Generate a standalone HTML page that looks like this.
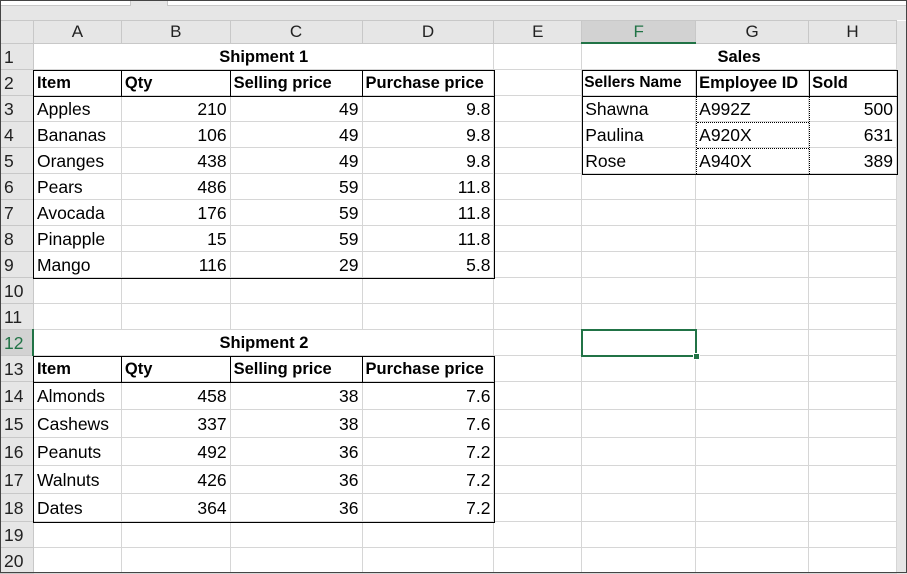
<!DOCTYPE html>
<html><head><style>
body{margin:0;width:907px;height:573px;overflow:hidden;background:#fff;font-family:"Liberation Sans",Arial,sans-serif;position:relative}
.top{position:absolute;left:0;top:0;width:907px;height:20px;background:#e6e6e6}
table{position:absolute;left:0;top:20px;border-collapse:collapse;table-layout:fixed;font-size:17.5px}
td{border:1px solid #d6d6d6;padding:0 3px 1px;white-space:nowrap;overflow:hidden;height:24px;line-height:22px;vertical-align:bottom;color:#000}
tr.h td{height:21px;line-height:21px;padding-bottom:0;vertical-align:middle;background:#e6e6e6;text-align:center;color:#222;border-color:#c8c8c8;font-size:17px}
td.rh{background:#e6e6e6;text-align:left;padding-left:3px;color:#222;border-color:#c8c8c8;font-size:17.5px}
tr.t td{height:25px;padding-bottom:2px}
.r{text-align:right}.c{text-align:center}.b{font-weight:bold;font-size:16.5px}
.bx{position:absolute;border:1px solid #000;box-sizing:border-box}
.ln{position:absolute;background:#000}
.dv{position:absolute;border-left:1px dotted #000}
.dh{position:absolute;border-top:1px dotted #000}
</style></head><body>
<div class="top">
<div style="position:absolute;left:0;top:0;width:129px;height:5px;background:#fff;border:1px solid #c8c8c8;border-top:none"></div>
<div style="position:absolute;left:167px;top:0;width:740px;height:5px;background:#fff;border-left:1px solid #c8c8c8;border-bottom:1px solid #c8c8c8"></div>
</div>
<table>
<colgroup><col style="width:33px"><col style="width:88px"><col style="width:109px"><col style="width:132px"><col style="width:132px"><col style="width:88px"><col style="width:114px"><col style="width:113px"><col style="width:88px"><col style="width:10px"></colgroup>
<tr class="h"><td style="background:#e6e6e6"></td><td>A</td><td>B</td><td>C</td><td>D</td><td>E</td><td style="background:#d2d2d2;color:#217346;border-bottom:2px solid #217346">F</td><td>G</td><td>H</td><td style="background:#e6e6e6;border:none"></td></tr>
<tr><td class="rh">1</td><td colspan="4" class="c b">Shipment 1</td><td></td><td colspan="3" class="c b">Sales</td><td style="background:#e6e6e6;border:none"></td></tr>
<tr><td class="rh">2</td><td class="b">Item</td><td class="b">Qty</td><td class="b">Selling price</td><td class="b">Purchase price</td><td></td><td class="b" style="padding:0 2px 1px;font-size:15.5px">Sellers Name</td><td class="b">Employee ID</td><td class="b">Sold</td><td style="background:#e6e6e6;border:none"></td></tr>
<tr><td class="rh">3</td><td>Apples</td><td class="r">210</td><td class="r">49</td><td class="r">9.8</td><td></td><td>Shawna</td><td>A992Z</td><td class="r">500</td><td style="background:#e6e6e6;border:none"></td></tr>
<tr><td class="rh">4</td><td>Bananas</td><td class="r">106</td><td class="r">49</td><td class="r">9.8</td><td></td><td>Paulina</td><td>A920X</td><td class="r">631</td><td style="background:#e6e6e6;border:none"></td></tr>
<tr><td class="rh">5</td><td>Oranges</td><td class="r">438</td><td class="r">49</td><td class="r">9.8</td><td></td><td>Rose</td><td>A940X</td><td class="r">389</td><td style="background:#e6e6e6;border:none"></td></tr>
<tr><td class="rh">6</td><td>Pears</td><td class="r">486</td><td class="r">59</td><td class="r">11.8</td><td></td><td></td><td></td><td></td><td style="background:#e6e6e6;border:none"></td></tr>
<tr><td class="rh">7</td><td>Avocada</td><td class="r">176</td><td class="r">59</td><td class="r">11.8</td><td></td><td></td><td></td><td></td><td style="background:#e6e6e6;border:none"></td></tr>
<tr><td class="rh">8</td><td>Pinapple</td><td class="r">15</td><td class="r">59</td><td class="r">11.8</td><td></td><td></td><td></td><td></td><td style="background:#e6e6e6;border:none"></td></tr>
<tr><td class="rh">9</td><td>Mango</td><td class="r">116</td><td class="r">29</td><td class="r">5.8</td><td></td><td></td><td></td><td></td><td style="background:#e6e6e6;border:none"></td></tr>
<tr><td class="rh">10</td><td></td><td></td><td></td><td></td><td></td><td></td><td></td><td></td><td style="background:#e6e6e6;border:none"></td></tr>
<tr><td class="rh">11</td><td></td><td></td><td></td><td></td><td></td><td></td><td></td><td></td><td style="background:#e6e6e6;border:none"></td></tr>
<tr><td class="rh" style="background:#d2d2d2;color:#217346;border-right:2px solid #217346">12</td><td colspan="4" class="c b">Shipment 2</td><td></td><td></td><td></td><td></td><td style="background:#e6e6e6;border:none"></td></tr>
<tr><td class="rh">13</td><td class="b">Item</td><td class="b">Qty</td><td class="b">Selling price</td><td class="b">Purchase price</td><td></td><td></td><td></td><td></td><td style="background:#e6e6e6;border:none"></td></tr>
<tr class="t"><td class="rh">14</td><td>Almonds</td><td class="r">458</td><td class="r">38</td><td class="r">7.6</td><td></td><td></td><td></td><td></td><td style="background:#e6e6e6;border:none"></td></tr>
<tr class="t"><td class="rh">15</td><td>Cashews</td><td class="r">337</td><td class="r">38</td><td class="r">7.6</td><td></td><td></td><td></td><td></td><td style="background:#e6e6e6;border:none"></td></tr>
<tr class="t"><td class="rh">16</td><td>Peanuts</td><td class="r">492</td><td class="r">36</td><td class="r">7.2</td><td></td><td></td><td></td><td></td><td style="background:#e6e6e6;border:none"></td></tr>
<tr class="t"><td class="rh">17</td><td>Walnuts</td><td class="r">426</td><td class="r">36</td><td class="r">7.2</td><td></td><td></td><td></td><td></td><td style="background:#e6e6e6;border:none"></td></tr>
<tr class="t"><td class="rh">18</td><td>Dates</td><td class="r">364</td><td class="r">36</td><td class="r">7.2</td><td></td><td></td><td></td><td></td><td style="background:#e6e6e6;border:none"></td></tr>
<tr><td class="rh">19</td><td></td><td></td><td></td><td></td><td></td><td></td><td></td><td></td><td style="background:#e6e6e6;border:none"></td></tr>
<tr><td class="rh">20</td><td></td><td></td><td></td><td></td><td></td><td></td><td></td><td></td><td style="background:#e6e6e6;border:none"></td></tr>
</table>
<div class="bx" style="left:33px;top:70px;width:462px;height:209px"></div>
<div class="ln" style="left:33px;top:96px;width:462px;height:1px"></div>
<div class="ln" style="left:121px;top:70px;width:1px;height:26px"></div>
<div class="ln" style="left:230px;top:70px;width:1px;height:26px"></div>
<div class="ln" style="left:362px;top:70px;width:1px;height:26px"></div>
<div class="bx" style="left:33px;top:356px;width:462px;height:167px"></div>
<div class="ln" style="left:33px;top:382px;width:462px;height:1px"></div>
<div class="ln" style="left:121px;top:356px;width:1px;height:26px"></div>
<div class="ln" style="left:230px;top:356px;width:1px;height:26px"></div>
<div class="ln" style="left:362px;top:356px;width:1px;height:26px"></div>
<div class="bx" style="left:582px;top:70px;width:316px;height:105px"></div>
<div class="ln" style="left:582px;top:96px;width:316px;height:1px"></div>
<div class="ln" style="left:696px;top:70px;width:1px;height:26px"></div>
<div class="ln" style="left:809px;top:70px;width:1px;height:26px"></div>
<div class="dv" style="left:696px;top:97px;height:77px"></div>
<div class="dv" style="left:809px;top:97px;height:77px"></div>
<div class="dh" style="left:697px;top:122px;width:112px"></div>
<div class="dh" style="left:697px;top:148px;width:112px"></div>
<div style="position:absolute;left:581px;top:329px;width:116px;height:28px;border:2px solid #217346;box-sizing:border-box"></div>
<div style="position:absolute;left:693px;top:353px;width:5px;height:5px;background:#217346;border:1px solid #fff"></div>
<div style="position:absolute;left:0;top:0;width:907px;height:573px;border:1px solid #444;box-sizing:border-box;pointer-events:none"></div>
</body></html>
